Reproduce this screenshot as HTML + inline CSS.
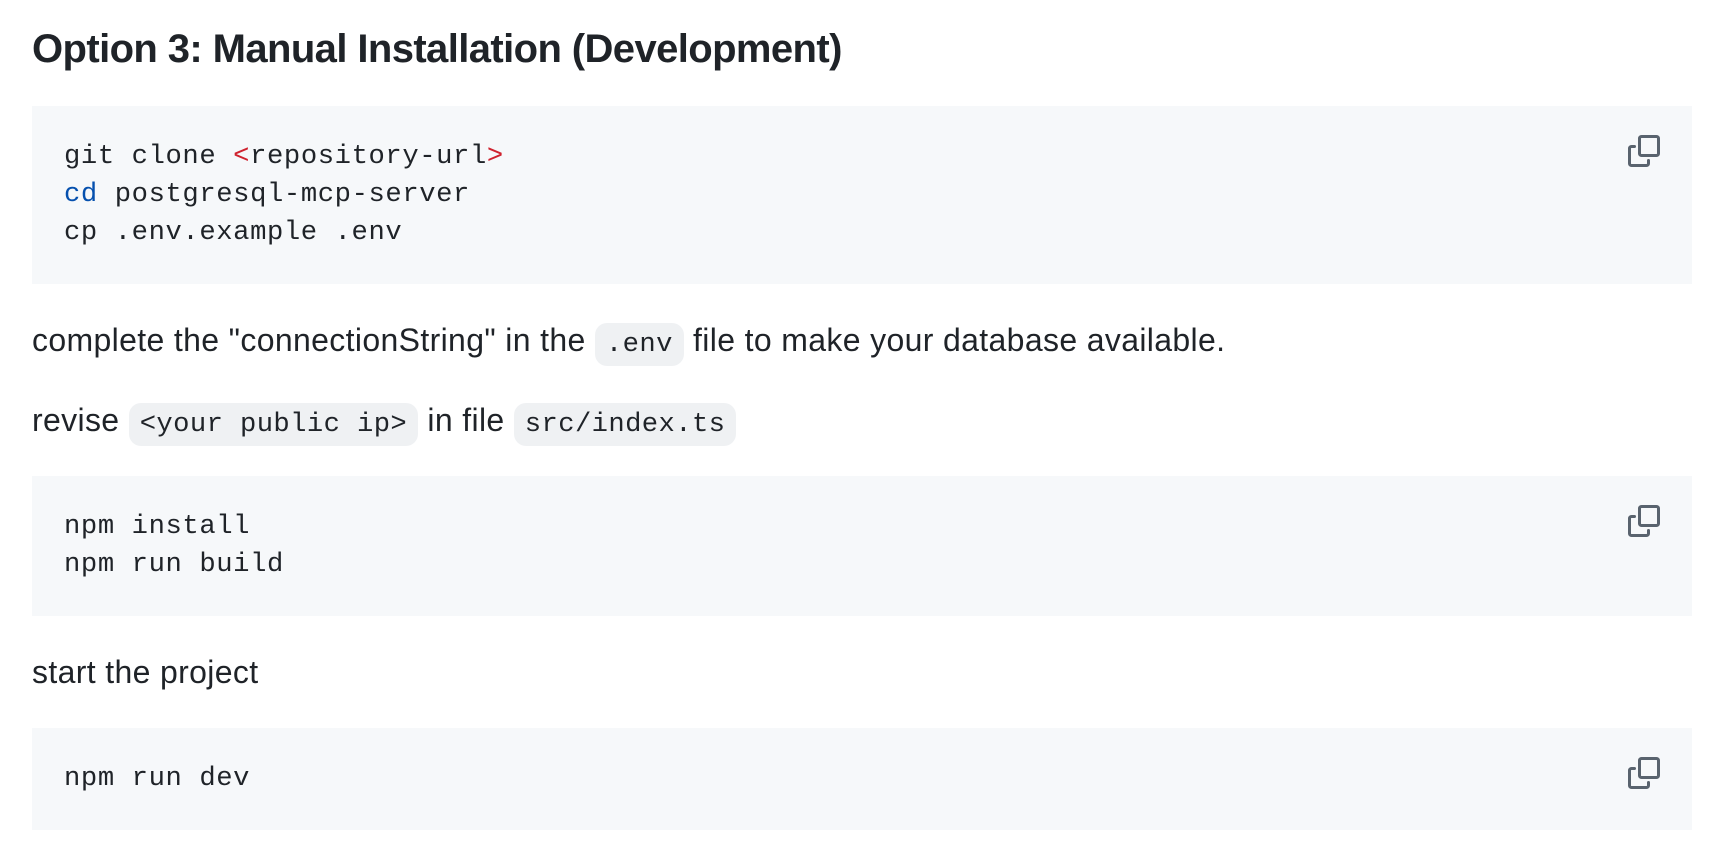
<!DOCTYPE html>
<html><head><meta charset="utf-8"><style>
html,body{margin:0;padding:0;background:#fff;}
body{width:1724px;height:866px;overflow:hidden;font-family:"Liberation Sans",sans-serif;color:#1f2328;font-size:32px;line-height:48px;}
.wrap{position:absolute;left:32px;top:24px;width:1660px;}
h3{margin:0 0 32px 0;font-size:40px;line-height:50px;font-weight:bold;letter-spacing:-0.6px;}
.pre{position:relative;background:#f6f8fa;padding:32px;margin:0 0 32px 0;font-family:"Liberation Mono",monospace;font-size:27.2px;line-height:38px;letter-spacing:0.6px;white-space:pre;color:#1f2328;}
.r{color:#cf222e}.b{color:#0550ae}
p{margin:0 0 32px 0;letter-spacing:0.35px;height:48px;}
code{font-family:"Liberation Mono",monospace;font-size:27.2px;line-height:1;background:#eff1f3;border-radius:12px;padding:6px 11px;letter-spacing:0.4px;}
svg{position:absolute;right:32px;top:29px;width:32px;height:32px;fill:#59636e;}
</style></head><body><div class="wrap">
<h3>Option 3: Manual Installation (Development)</h3>
<div class="pre">git clone <span class="r">&lt;</span>repository-url<span class="r">&gt;</span>
<span class="b">cd</span> postgresql-mcp-server
cp .env.example .env<svg viewBox="0 0 16 16"><path d="M0 6.75C0 5.784.784 5 1.75 5h1.5a.75.75 0 0 1 0 1.5h-1.5a.25.25 0 0 0-.25.25v7.5c0 .138.112.25.25.25h7.5a.25.25 0 0 0 .25-.25v-1.5a.75.75 0 0 1 1.5 0v1.5A1.75 1.75 0 0 1 9.25 16h-7.5A1.75 1.75 0 0 1 0 14.25Z"/><path d="M5 1.75C5 .784 5.784 0 6.75 0h7.5C15.216 0 16 .784 16 1.75v7.5A1.75 1.75 0 0 1 14.25 11h-7.5A1.75 1.75 0 0 1 5 9.25Zm1.75-.25a.25.25 0 0 0-.25.25v7.5c0 .138.112.25.25.25h7.5a.25.25 0 0 0 .25-.25v-7.5a.25.25 0 0 0-.25-.25Z"/></svg></div>
<p>complete the "connectionString" in the <code>.env</code> file to make your database available.</p>
<p>revise <code>&lt;your public ip&gt;</code> in file <code>src/index.ts</code></p>
<div class="pre">npm install
npm run build<svg viewBox="0 0 16 16"><path d="M0 6.75C0 5.784.784 5 1.75 5h1.5a.75.75 0 0 1 0 1.5h-1.5a.25.25 0 0 0-.25.25v7.5c0 .138.112.25.25.25h7.5a.25.25 0 0 0 .25-.25v-1.5a.75.75 0 0 1 1.5 0v1.5A1.75 1.75 0 0 1 9.25 16h-7.5A1.75 1.75 0 0 1 0 14.25Z"/><path d="M5 1.75C5 .784 5.784 0 6.75 0h7.5C15.216 0 16 .784 16 1.75v7.5A1.75 1.75 0 0 1 14.25 11h-7.5A1.75 1.75 0 0 1 5 9.25Zm1.75-.25a.25.25 0 0 0-.25.25v7.5c0 .138.112.25.25.25h7.5a.25.25 0 0 0 .25-.25v-7.5a.25.25 0 0 0-.25-.25Z"/></svg></div>
<p>start the project</p>
<div class="pre">npm run dev<svg viewBox="0 0 16 16"><path d="M0 6.75C0 5.784.784 5 1.75 5h1.5a.75.75 0 0 1 0 1.5h-1.5a.25.25 0 0 0-.25.25v7.5c0 .138.112.25.25.25h7.5a.25.25 0 0 0 .25-.25v-1.5a.75.75 0 0 1 1.5 0v1.5A1.75 1.75 0 0 1 9.25 16h-7.5A1.75 1.75 0 0 1 0 14.25Z"/><path d="M5 1.75C5 .784 5.784 0 6.75 0h7.5C15.216 0 16 .784 16 1.75v7.5A1.75 1.75 0 0 1 14.25 11h-7.5A1.75 1.75 0 0 1 5 9.25Zm1.75-.25a.25.25 0 0 0-.25.25v7.5c0 .138.112.25.25.25h7.5a.25.25 0 0 0 .25-.25v-7.5a.25.25 0 0 0-.25-.25Z"/></svg></div>
</div></body></html>
